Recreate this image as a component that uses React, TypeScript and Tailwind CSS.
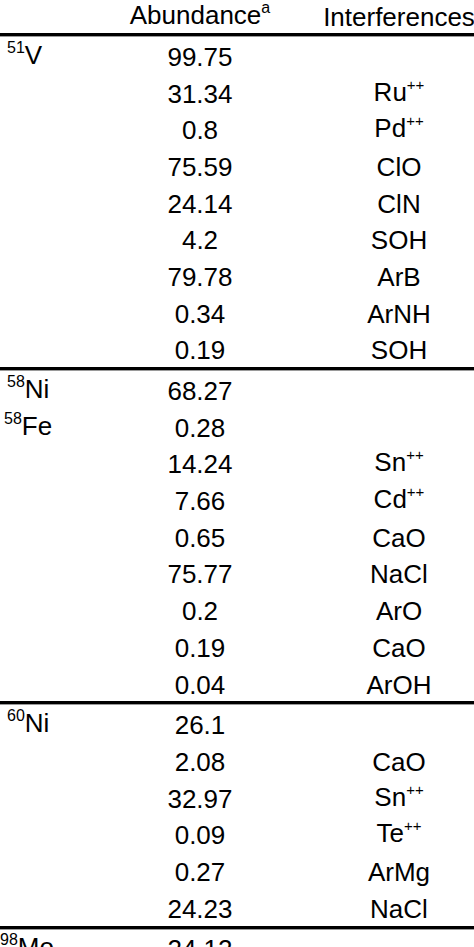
import React from 'react';

type Row = { label?: [string, string]; value: string; interference?: [string, string?] };

const groups: Row[][] = [
  [
    { label: ['51', 'V'], value: '99.75' },
    { value: '31.34', interference: ['Ru', '++'] },
    { value: '0.8', interference: ['Pd', '++'] },
    { value: '75.59', interference: ['ClO'] },
    { value: '24.14', interference: ['ClN'] },
    { value: '4.2', interference: ['SOH'] },
    { value: '79.78', interference: ['ArB'] },
    { value: '0.34', interference: ['ArNH'] },
    { value: '0.19', interference: ['SOH'] },
  ],
  [
    { label: ['58', 'Ni'], value: '68.27' },
    { label: ['58', 'Fe'], value: '0.28' },
    { value: '14.24', interference: ['Sn', '++'] },
    { value: '7.66', interference: ['Cd', '++'] },
    { value: '0.65', interference: ['CaO'] },
    { value: '75.77', interference: ['NaCl'] },
    { value: '0.2', interference: ['ArO'] },
    { value: '0.19', interference: ['CaO'] },
    { value: '0.04', interference: ['ArOH'] },
  ],
  [
    { label: ['60', 'Ni'], value: '26.1' },
    { value: '2.08', interference: ['CaO'] },
    { value: '32.97', interference: ['Sn', '++'] },
    { value: '0.09', interference: ['Te', '++'] },
    { value: '0.27', interference: ['ArMg'] },
    { value: '24.23', interference: ['NaCl'] },
  ],
  [{ label: ['98', 'Mo'], value: '24.12' }],
];

function Rule() {
  return (
    <div>
      <div className="h-[3px] bg-black" />
      <div className="h-px bg-[#9a9a9a]" />
    </div>
  );
}

// small offsets of the label column, as in the scanned table
const labelPad: Record<string, string> = {
  Fe: 'pl-[4px]',
  Mo: 'pl-0',
};

function TableRow({ row }: { row: Row }) {
  const pad = (row.label && labelPad[row.label[1]]) || 'pl-[7px]';
  return (
    <div className="grid grid-cols-[100px_200px_198px] h-[36.7px] pt-[3px] items-center">
      <div className={pad}>
        {row.label && (
          <span>
            <span className="relative -top-[11px] text-[16px]">{row.label[0]}</span>
            {row.label[1]}
          </span>
        )}
      </div>
      <div className="text-center">{row.value}</div>
      <div className="text-center">
        {row.interference && (
          <span>
            {row.interference[0]}
            {row.interference[1] && (
              <span className="relative -top-[11px] text-[15px]">{row.interference[1]}</span>
            )}
          </span>
        )}
      </div>
    </div>
  );
}

export default function App() {
  return (
    <div className="w-[474px] h-[947px] overflow-hidden bg-white text-black font-['Liberation_Sans',Arial,sans-serif] text-[26px] leading-[26px]">
      <div className="grid grid-cols-[100px_200px_198px] h-[33px] items-center whitespace-nowrap">
        <div />
        <div className="text-center">
          Abundance<span className="relative -top-[11px] text-[16px]">a</span>
        </div>
        <div className="text-center">Interferences</div>
      </div>
      {groups.map((g, gi) => (
        <div key={gi}>
          <Rule />
          {g.map((row, ri) => (
            <TableRow key={ri} row={row} />
          ))}
        </div>
      ))}
    </div>
  );
}
